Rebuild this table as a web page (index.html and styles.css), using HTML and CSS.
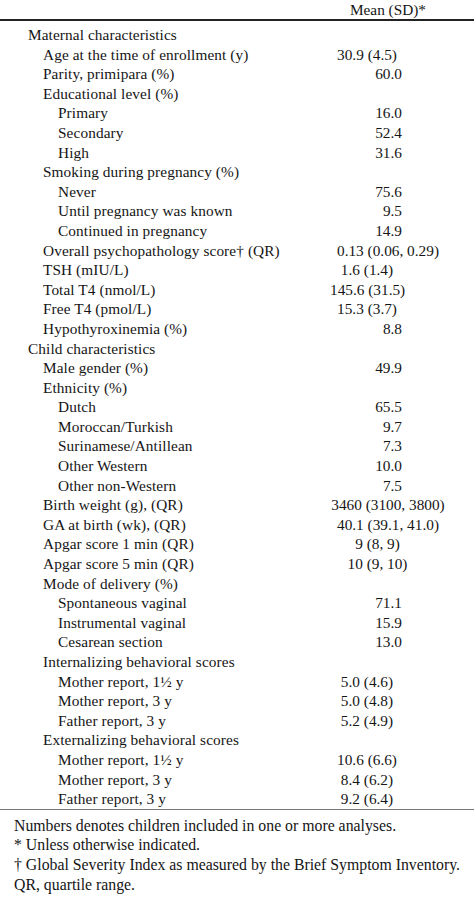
FILE: index.html
```html
<!DOCTYPE html>
<html>
<head>
<meta charset="utf-8">
<link rel="stylesheet" href="styles.css">
</head>
<body>
<div class="table">
  <div class="head">
    <div class="label"></div>
    <div class="val"><span class="wide">Mean (SD)*</span></div>
  </div>
  <div class="body">
    <div class="row"><div class="label l0">Maternal characteristics</div><div class="val"></div></div>
    <div class="row"><div class="label l1">Age at the time of enrollment (y)</div><div class="val"><span class="mid">30.9 (4.5)</span></div></div>
    <div class="row"><div class="label l1">Parity, primipara (%)</div><div class="val"><span class="num">60.0</span></div></div>
    <div class="row"><div class="label l1">Educational level (%)</div><div class="val"></div></div>
    <div class="row"><div class="label l2">Primary</div><div class="val"><span class="num">16.0</span></div></div>
    <div class="row"><div class="label l2">Secondary</div><div class="val"><span class="num">52.4</span></div></div>
    <div class="row"><div class="label l2">High</div><div class="val"><span class="num">31.6</span></div></div>
    <div class="row"><div class="label l1">Smoking during pregnancy (%)</div><div class="val"></div></div>
    <div class="row"><div class="label l2">Never</div><div class="val"><span class="num">75.6</span></div></div>
    <div class="row"><div class="label l2">Until pregnancy was known</div><div class="val"><span class="num">9.5</span></div></div>
    <div class="row"><div class="label l2">Continued in pregnancy</div><div class="val"><span class="num">14.9</span></div></div>
    <div class="row"><div class="label l1">Overall psychopathology score† (QR)</div><div class="val"><span class="wide">0.13 (0.06, 0.29)</span></div></div>
    <div class="row"><div class="label l1">TSH (mIU/L)</div><div class="val"><span class="mid">1.6 (1.4)</span></div></div>
    <div class="row"><div class="label l1">Total T4 (nmol/L)</div><div class="val"><span class="mid">145.6 (31.5)</span></div></div>
    <div class="row"><div class="label l1">Free T4 (pmol/L)</div><div class="val"><span class="mid">15.3 (3.7)</span></div></div>
    <div class="row"><div class="label l1">Hypothyroxinemia (%)</div><div class="val"><span class="num">8.8</span></div></div>
    <div class="row"><div class="label l0">Child characteristics</div><div class="val"></div></div>
    <div class="row"><div class="label l1">Male gender (%)</div><div class="val"><span class="num">49.9</span></div></div>
    <div class="row"><div class="label l1">Ethnicity (%)</div><div class="val"></div></div>
    <div class="row"><div class="label l2">Dutch</div><div class="val"><span class="num">65.5</span></div></div>
    <div class="row"><div class="label l2">Moroccan/Turkish</div><div class="val"><span class="num">9.7</span></div></div>
    <div class="row"><div class="label l2">Surinamese/Antillean</div><div class="val"><span class="num">7.3</span></div></div>
    <div class="row"><div class="label l2">Other Western</div><div class="val"><span class="num">10.0</span></div></div>
    <div class="row"><div class="label l2">Other non-Western</div><div class="val"><span class="num">7.5</span></div></div>
    <div class="row"><div class="label l1">Birth weight (g), (QR)</div><div class="val"><span class="wide">3460 (3100, 3800)</span></div></div>
    <div class="row"><div class="label l1">GA at birth (wk), (QR)</div><div class="val"><span class="wide">40.1 (39.1, 41.0)</span></div></div>
    <div class="row"><div class="label l1">Apgar score 1 min (QR)</div><div class="val"><span class="apg">9 (8, 9)</span></div></div>
    <div class="row"><div class="label l1">Apgar score 5 min (QR)</div><div class="val"><span class="apg">10 (9, 10)</span></div></div>
    <div class="row"><div class="label l1">Mode of delivery (%)</div><div class="val"></div></div>
    <div class="row"><div class="label l2">Spontaneous vaginal</div><div class="val"><span class="num">71.1</span></div></div>
    <div class="row"><div class="label l2">Instrumental vaginal</div><div class="val"><span class="num">15.9</span></div></div>
    <div class="row"><div class="label l2">Cesarean section</div><div class="val"><span class="num">13.0</span></div></div>
    <div class="row"><div class="label l1">Internalizing behavioral scores</div><div class="val"></div></div>
    <div class="row"><div class="label l2">Mother report, 1½ y</div><div class="val"><span class="mid">5.0 (4.6)</span></div></div>
    <div class="row"><div class="label l2">Mother report, 3 y</div><div class="val"><span class="mid">5.0 (4.8)</span></div></div>
    <div class="row"><div class="label l2">Father report, 3 y</div><div class="val"><span class="mid">5.2 (4.9)</span></div></div>
    <div class="row"><div class="label l1">Externalizing behavioral scores</div><div class="val"></div></div>
    <div class="row"><div class="label l2">Mother report, 1½ y</div><div class="val"><span class="mid">10.6 (6.6)</span></div></div>
    <div class="row"><div class="label l2">Mother report, 3 y</div><div class="val"><span class="mid">8.4 (6.2)</span></div></div>
    <div class="row"><div class="label l2">Father report, 3 y</div><div class="val"><span class="mid">9.2 (6.4)</span></div></div>
  </div>
  <div class="notes">
    <p>Numbers denotes children included in one or more analyses.</p>
    <p>* Unless otherwise indicated.</p>
    <p>† Global Severity Index as measured by the Brief Symptom Inventory.</p>
    <p>QR, quartile range.</p>
  </div>
</div>
</body>
</html>
```
FILE: styles.css
```css
html, body {
  margin: 0;
  padding: 0;
  background: #ffffff;
}
body {
  font-family: "Liberation Serif", "Times New Roman", serif;
  font-size: 15.3px;
  color: #151515;
  width: 474px;
}
.table {
  display: flex;
  flex-direction: column;
}
.head {
  display: grid;
  grid-template-columns: 330px 144px;
  height: 19px;
  line-height: 19px;
  border-bottom: 2px solid #222;
}
.body {
  display: flex;
  flex-direction: column;
  padding-top: 4px;
  border-bottom: 1px solid #777;
}
.row {
  display: grid;
  grid-template-columns: 330px 144px;
  height: 19.6px;
  line-height: 19.6px;
}
.label {
  white-space: nowrap;
  letter-spacing: 0.1px;
}
.l0 { padding-left: 28px; }
.l1 { padding-left: 43px; }
.l2 { padding-left: 58px; }
.val {
  display: flex;
  white-space: nowrap;
}
.num {
  display: block;
  width: 72px;
  text-align: right;
}
.mid {
  display: block;
  width: 74px;
  text-align: center;
}
.wide {
  display: block;
  width: 116px;
  text-align: center;
}
.apg {
  display: block;
  width: 95px;
  text-align: center;
}
.notes {
  padding-top: 6px;
  padding-left: 14px;
  font-size: 15.8px;
}
.notes p {
  margin: 0;
  height: 19.6px;
  line-height: 19.6px;
  white-space: nowrap;
}
```
